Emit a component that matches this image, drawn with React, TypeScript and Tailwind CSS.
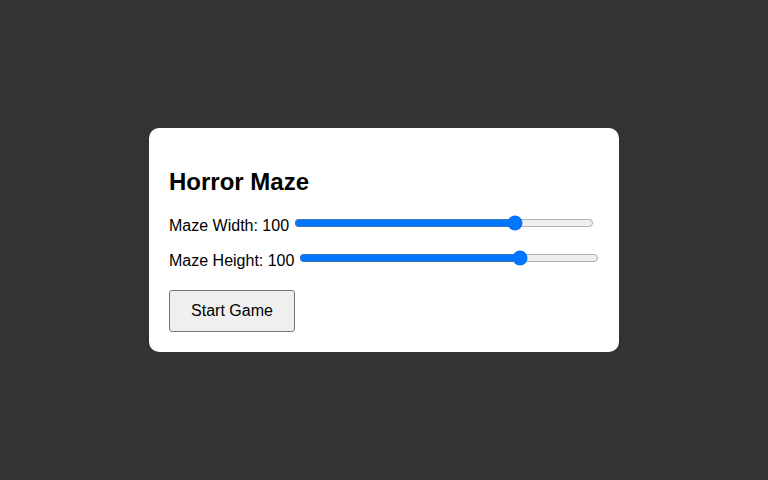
import React, { useState } from 'react';

export default function App() {
  const [mazeWidth, setMazeWidth] = useState(100);
  const [mazeHeight, setMazeHeight] = useState(100);

  return (
    <div className="w-full h-screen bg-[#333333] flex items-center justify-center font-['Liberation_Sans',Arial,sans-serif] text-black">
      <div className="w-[470px] bg-white rounded-[10px] p-5">
        <h2 className="mt-5 mb-5 text-[24px] font-bold leading-[28px]">Horror Maze</h2>

        <div className="mb-[15px] h-[20px] flex items-center text-[16px] whitespace-nowrap">
          <label htmlFor="mazeWidth" className="shrink-0">Maze Width: {mazeWidth}</label>
          <input
            id="mazeWidth"
            type="range"
            min={25}
            max={125}
            value={mazeWidth}
            onChange={(e) => setMazeWidth(Number(e.target.value))}
            className="ml-[5px] w-[300px] shrink-0 -mt-[6px]"
          />
        </div>

        <div className="mb-[19px] h-[20px] flex items-center text-[16px] whitespace-nowrap">
          <label htmlFor="mazeHeight" className="shrink-0">Maze Height: {mazeHeight}</label>
          <input
            id="mazeHeight"
            type="range"
            min={25}
            max={125}
            value={mazeHeight}
            onChange={(e) => setMazeHeight(Number(e.target.value))}
            className="ml-[5px] w-[300px] shrink-0 -mt-[6px]"
          />
        </div>

        <button className="h-[42px] w-[126px] text-center bg-[#efefef] border border-[#767676] rounded-[3px] text-[16px]">
          Start Game
        </button>
      </div>
    </div>
  );
}
